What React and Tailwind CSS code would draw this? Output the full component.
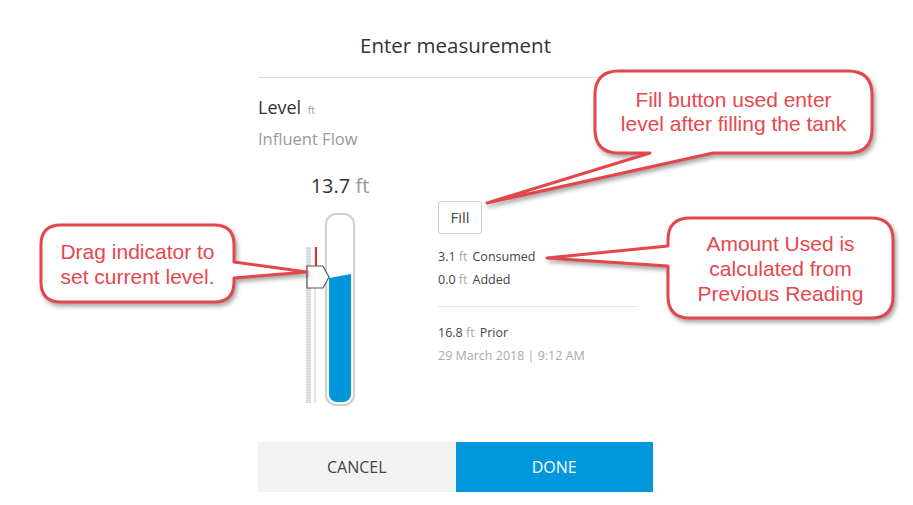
import React from "react";

const bubble = (x, y, w, h, r, tail) => {
  let d = `M${x + r},${y} L${x + w - r},${y} Q${x + w},${y} ${x + w},${y + r} `;
  if (tail.side === "right") {
    d += `L${x + w},${tail.a} L${tail.tx},${tail.ty} L${x + w},${tail.b} `;
  }
  d += `L${x + w},${y + h - r} Q${x + w},${y + h} ${x + w - r},${y + h} `;
  if (tail.side === "bottom") {
    d += `L${tail.a},${y + h} L${tail.tx},${tail.ty} L${tail.b},${y + h} `;
  }
  d += `L${x + r},${y + h} Q${x},${y + h} ${x},${y + h - r} `;
  if (tail.side === "left") {
    d += `L${x},${tail.a} L${tail.tx},${tail.ty} L${x},${tail.b} `;
  }
  d += `L${x},${y + r} Q${x},${y} ${x + r},${y} Z`;
  return d;
};

const callouts = [
  bubble(595, 71, 277, 82, 24, { side: "bottom", a: 713, b: 650, tx: 487, ty: 203 }),
  bubble(41, 225, 193, 77, 20, { side: "right", a: 262, b: 278, tx: 307, ty: 272 }),
  bubble(668, 218, 225, 100, 22, { side: "left", a: 266, b: 246, tx: 547, ty: 258 }),
];

const Stat = ({ value, label }) => (
  <div className="text-[12.5px] leading-[16px] text-[#444]">
    {value} <span className="text-[#aaa]">ft</span>
    <span className="ml-[5px]">{label}</span>
  </div>
);

const App = () => {
  return (
    <div className="relative w-[913px] h-[505px] bg-white overflow-hidden font-['Open_Sans',sans-serif]">
      {/* Dialog */}
      <div className="ml-[258px] w-[395px] flex flex-col">
        <div className="pt-[33px] pb-[20px] border-b border-[#dcdcdc] text-center text-[20.5px] leading-[24px] text-[#333]">
          Enter measurement
        </div>

        <div className="mt-[17px] text-[18px] leading-[24px] text-[#333]">
          Level <span className="ml-[2px] text-[10px] text-[#999]">ft</span>
        </div>
        <div className="mt-[7px] text-[16.5px] leading-[20px] text-[#9a9a9a]">Influent Flow</div>

        <div className="mt-[25px] flex">
          {/* Gauge column */}
          <div className="w-[164px] flex flex-col">
            <div className="text-center text-[20px] leading-[24px] text-[#333]">
              13.7 <span className="text-[#999]">ft</span>
            </div>
            <div className="relative mt-[15px] h-[193px] pl-[48px] flex items-end">
              <div className="mb-[3px] w-[5px] h-[156px] bg-[repeating-linear-gradient(0deg,#d6d6d6_0px,#d6d6d6_1px,#e4e4e4_1px,#e4e4e4_2px)]" />
              <div className="mb-[3px] ml-[3px] w-[2px] h-[156px] bg-[#e6e6e6]" />
              <div className="ml-[9px] w-[30px] h-[193px] border-2 border-[#cfcfcf] rounded-[11px] p-[2px] flex items-end">
                <div className="w-full h-[128px] bg-[#0096da] rounded-b-[8px] [clip-path:polygon(0_4px,100%_0,100%_100%,0_100%)]" />
              </div>
              <div className="absolute left-[57px] top-[34px] w-[2px] h-[20px] bg-[#d9312f]" />
              <svg className="absolute left-[48px] top-[52px]" width="25" height="24" viewBox="0 0 25 24">
                <path d="M1,1 L17,1 L23,12 L17,23 L1,23 Z" fill="white" stroke="#555" strokeWidth="1.2" />
              </svg>
            </div>
          </div>

          {/* Info column */}
          <div className="ml-[16px] w-[200px] pt-[27px] flex flex-col">
            <div className="w-[44px] h-[33px] border border-[#cfcfcf] rounded-[3px] flex items-center justify-center text-[15px] text-[#444]">
              Fill
            </div>
            <div className="mt-[15px]">
              <Stat value="3.1" label="Consumed" />
            </div>
            <div className="mt-[7px]">
              <Stat value="0.0" label="Added" />
            </div>
            <div className="mt-[18px] border-t border-[#e6e6e6]" />
            <div className="mt-[18px]">
              <Stat value="16.8" label="Prior" />
            </div>
            <div className="mt-[7px] text-[12.5px] leading-[16px] text-[#aaa]">29 March 2018 | 9:12 AM</div>
          </div>
        </div>

        <div className="mt-[36px] flex h-[50px] text-[16px]">
          <div className="flex-1 bg-[#f2f2f2] flex items-center justify-center text-[#444]">CANCEL</div>
          <div className="flex-1 bg-[#0097dc] flex items-center justify-center text-white">DONE</div>
        </div>
      </div>

      {/* Annotation callouts */}
      <svg className="absolute left-0 top-0 drop-shadow-[2px_3px_2px_rgba(0,0,0,0.35)]" width="913" height="505">
        {callouts.map((d, i) => (
          <path key={i} d={d} fill="white" stroke="#e4474b" strokeWidth="3" strokeLinejoin="round" />
        ))}
      </svg>
      <div className="absolute left-[595px] top-[71px] w-[277px] h-[82px] flex flex-col items-center justify-center font-['Liberation_Sans',Arial,sans-serif] text-[21px] leading-[24px] text-[#e8474c]">
        <span>Fill button used enter</span>
        <span>level after filling the tank</span>
      </div>
      <div className="absolute left-[41px] top-[225px] w-[193px] h-[77px] flex flex-col items-center justify-center font-['Liberation_Sans',Arial,sans-serif] text-[21px] leading-[25px] text-[#e8474c]">
        <span>Drag indicator to</span>
        <span>set current level.</span>
      </div>
      <div className="absolute left-[668px] top-[218px] w-[225px] h-[100px] flex flex-col items-center justify-center font-['Liberation_Sans',Arial,sans-serif] text-[21px] leading-[25px] text-[#e8474c]">
        <span>Amount Used is</span>
        <span>calculated from</span>
        <span>Previous Reading</span>
      </div>
    </div>
  );
};

export default App;
